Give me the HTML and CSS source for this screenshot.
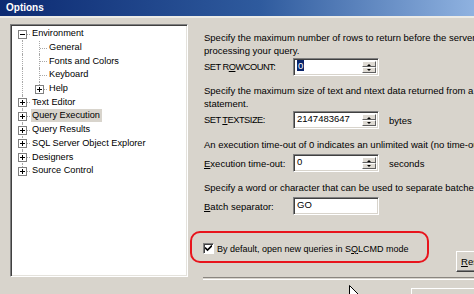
FILE: index.html
```html
<!DOCTYPE html>
<html lang="en">
<head>
    <meta charset="UTF-8">
    <title>Options</title>
    <link rel="stylesheet" href="styles.css">
</head>
<body>
    <div class="window">
        <div class="titlebar">Options</div>
        <div class="main">
            <div class="tree">
                <div class="node"><span class="g f"><span class="box minus"></span></span><span class="label">Environment</span></div>
                <div class="node"><span class="g v"></span><span class="g t"></span><span class="label">General</span></div>
                <div class="node"><span class="g v"></span><span class="g t"></span><span class="label">Fonts and Colors</span></div>
                <div class="node"><span class="g v"></span><span class="g t"></span><span class="label">Keyboard</span></div>
                <div class="node"><span class="g v"></span><span class="g l"><span class="box"></span></span><span class="label">Help</span></div>
                <div class="node"><span class="g t"><span class="box"></span></span><span class="label">Text Editor</span></div>
                <div class="node"><span class="g t"><span class="box"></span></span><span class="label selected">Query Execution</span></div>
                <div class="node"><span class="g t"><span class="box"></span></span><span class="label">Query Results</span></div>
                <div class="node"><span class="g t"><span class="box"></span></span><span class="label">SQL Server Object Explorer</span></div>
                <div class="node"><span class="g t"><span class="box"></span></span><span class="label">Designers</span></div>
                <div class="node"><span class="g l"><span class="box"></span></span><span class="label">Source Control</span></div>
            </div>

            <div class="page">
                <p class="desc">Specify the maximum number of rows to return before the server stops<br>processing your query.</p>
                <div class="field">
                    <label class="caps">SET R<u>O</u>WCOUNT:</label>
                    <div class="textbox"><span class="sel">0</span><span class="spin"><i class="up"></i><i class="down"></i></span></div>
                </div>

                <p class="desc gap">Specify the maximum size of text and ntext data returned from a SELECT<br>statement.</p>
                <div class="field">
                    <label class="caps">SET <u>T</u>EXTSIZE:</label>
                    <div class="textbox">2147483647<span class="spin"><i class="up"></i><i class="down"></i></span></div>
                    <span class="unit">bytes</span>
                </div>

                <p class="desc gap single">An execution time-out of 0 indicates an unlimited wait (no time-out).</p>
                <div class="field">
                    <label><u>E</u>xecution time-out:</label>
                    <div class="textbox">0<span class="spin"><i class="up"></i><i class="down"></i></span></div>
                    <span class="unit">seconds</span>
                </div>

                <p class="desc gap single">Specify a word or character that can be used to separate batches.</p>
                <div class="field">
                    <label><u>B</u>atch separator:</label>
                    <div class="textbox">GO</div>
                </div>

                <div class="check-row">
                    <span class="checkbox">
                        <svg width="7" height="7" viewBox="0 0 7 7"><path d="M0 2.5 L2.5 5 L7 0.5" fill="none" stroke="#000" stroke-width="1.6"/></svg>
                    </span>
                    <span>By default, open new queries in S<u>Q</u>LCMD mode</span>
                </div>

                <div class="button-row">
                    <button class="btn"><u>R</u>eset</button>
                </div>
            </div>
        </div>

        <div class="footer">
            <div class="separator"></div>
            <div class="footer-buttons">
                <button class="btn">OK</button>
            </div>
        </div>

        <div class="highlight"></div>
        <svg class="cursor" width="12" height="19" viewBox="0 0 12 19">
            <path d="M0.5 0.5 L0.5 15 L4 11.5 L6.5 17.5 L8.5 16.5 L6 10.5 L10.5 10.5 Z" fill="#fff" stroke="#000" stroke-width="1"/>
        </svg>
    </div>
</body>
</html>
```

FILE: styles.css
```css
html, body {
    margin: 0;
    padding: 0;
}
body {
    width: 474px;
    height: 294px;
    overflow: hidden;
    background: #d8d4cc;
    font-family: "Liberation Sans", Arial, sans-serif;
    font-size: 9.2px;
    color: #000;
}
.window {
    position: relative;
    width: 474px;
    height: 294px;
}
.titlebar {
    height: 16px;
    line-height: 16px;
    padding-left: 6px;
    background: linear-gradient(to right, #0c2a72 0%, #2f5b9e 55%, #8fb2e0 100%);
    color: #fff;
    font-weight: bold;
    font-size: 10px;
    border-bottom: 2px solid #ecebe6;
}
.main {
    display: flex;
    padding: 6px 0 0 10px;
    height: 253px;
}

/* tree */
.tree {
    flex: none;
    width: 173px;
    height: 249px;
    padding-top: 2px;
    padding-left: 3px;
    background: #fff;
    border: 1px solid;
    border-color: #808080 #fff #fff #808080;
    box-shadow: inset 1px 1px #404040, inset -1px -1px #e4e2dc;
}
.node {
    display: flex;
    align-items: center;
    height: 13.7px;
    line-height: 13.7px;
    white-space: nowrap;
}
.label {
    padding: 0 2px 0 1px;
    line-height: 13px;
}
.label.selected {
    background: #d8d4cc;
}
.g {
    flex: none;
    position: relative;
    width: 17px;
    height: 100%;
}
.g.v::before, .g.t::before, .g.l::before, .g.f::before {
    content: '';
    position: absolute;
    left: 8px;
    top: 0;
    bottom: 0;
    border-left: 1px dotted #a8a8a8;
}
.g.l::before {
    bottom: 50%;
}
.g.f::before {
    top: 50%;
}
.g.t::after, .g.l::after, .g.f::after {
    content: '';
    position: absolute;
    left: 9px;
    right: 1px;
    top: 50%;
    border-top: 1px dotted #a8a8a8;
}
.box {
    position: absolute;
    z-index: 1;
    left: 4px;
    top: 50%;
    margin-top: -4px;
    width: 7px;
    height: 7px;
    border: 1px solid #808080;
    background: #fff;
}
.box::before {
    content: '';
    position: absolute;
    left: 1px;
    top: 3px;
    width: 5px;
    height: 1px;
    background: #000;
}
.box::after {
    content: '';
    position: absolute;
    left: 3px;
    top: 1px;
    width: 1px;
    height: 5px;
    background: #000;
}
.box.minus::after {
    display: none;
}

/* right page */
.page {
    flex: none;
    margin-left: 16px;
    padding-top: 7px;
    white-space: nowrap;
    font-size: 9.5px;
}
.desc {
    margin: 0;
    line-height: 13px;
}
.desc.gap {
    margin-top: 8px;
}
.desc.single {
    margin-top: 9px;
    margin-bottom: 3px;
}
.field {
    display: flex;
    align-items: center;
    height: 18px;
    margin-top: 1px;
}
.field label {
    width: 89px;
}
.field label.caps {
    font-size: 9.3px;
    letter-spacing: -0.5px;
}
.textbox {
    position: relative;
    box-sizing: border-box;
    width: 86px;
    height: 18px;
    line-height: 14px;
    padding-left: 3px;
    background: #fff;
    border: 1px solid;
    border-color: #808080 #fff #fff #808080;
    box-shadow: inset 1px 1px #404040, inset -1px -1px #d8d4cc;
}
.sel {
    background: #0a246a;
    color: #fff;
    padding: 0 1px;
}
.spin {
    position: absolute;
    right: 2px;
    top: 2px;
    bottom: 2px;
    width: 14px;
    display: flex;
    flex-direction: column;
}
.spin i {
    flex: 1;
    position: relative;
    background: #dedad3;
    border: 1px solid;
    border-color: #fff #606060 #606060 #fff;
    box-sizing: border-box;
}
.spin i::after {
    content: '';
    position: absolute;
    left: 4px;
    top: 2px;
    border-left: 2px solid transparent;
    border-right: 2px solid transparent;
}
.spin .up::after {
    border-bottom: 2px solid #000;
}
.spin .down::after {
    top: 1px;
    border-top: 2px solid #000;
}
.unit {
    margin-left: 10px;
}
.check-row {
    display: flex;
    align-items: center;
    margin-top: 27px;
    height: 13px;
    font-size: 9px;
}
.checkbox {
    box-sizing: border-box;
    width: 11px;
    height: 11px;
    margin: 0 3px 0 -1px;
    display: flex;
    align-items: center;
    justify-content: center;
    background: #fff;
    border: 1px solid;
    border-color: #808080 #fff #fff #808080;
    box-shadow: inset 1px 1px #404040;
}
.button-row {
    margin-top: -4px;
    padding-left: 252px;
}
.btn {
    box-sizing: border-box;
    width: 72px;
    height: 21px;
    padding: 0 0 0 4px;
    text-align: left;
    font-family: "Liberation Sans", Arial, sans-serif;
    font-size: 9.5px;
    background: #d8d4cc;
    border: 1px solid;
    border-color: #fff #404040 #404040 #fff;
    box-shadow: inset -1px -1px #808080;
}

/* footer */
.footer {
    padding-left: 203px;
}
.separator {
    height: 1px;
    border-top: 1px solid #8a8680;
    border-bottom: 1px solid #fff;
}
.footer-buttons {
    margin-top: 8px;
    padding-left: 208px;
}

/* annotation and pointer lie over the dialog */
.highlight {
    position: absolute;
    left: 190px;
    top: 231px;
    width: 235px;
    height: 28px;
    border: 2px solid #e8141c;
    border-radius: 10px;
}
.cursor {
    position: absolute;
    left: 349px;
    top: 285px;
}
```
